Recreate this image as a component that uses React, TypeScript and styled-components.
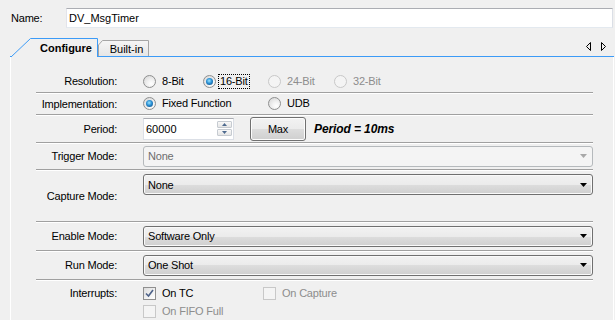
import React from "react";
import styled, { createGlobalStyle } from "styled-components";

const GlobalStyle = createGlobalStyle`
  html, body {
    margin: 0;
    padding: 0;
    background: #f0f0f0;
  }
  body {
    font-family: "Liberation Sans", Arial, sans-serif;
    font-size: 11px;
    letter-spacing: -0.2px;
    color: #000;
  }
`;

const Window = styled.div`
  width: 615px;
  height: 320px;
  overflow: hidden;
  background: #f0f0f0;
`;

const NameRow = styled.div`
  display: flex;
  align-items: center;
  padding: 8px 2px 0 11px;
  height: 20px;
`;

const NameLabel = styled.span`
  width: 55px;
`;

const NameInput = styled.div`
  flex: 1;
  height: 20px;
  box-sizing: border-box;
  background: #fff;
  border: 1px solid #e3e9ef;
  border-top-color: #abadb3;
  border-left-color: #e2e3ea;
  border-right-color: #dbdfe6;
  padding: 0 2px;
  display: flex;
  align-items: center;
  letter-spacing: 0;
`;

// tab strip
const TabStrip = styled.div`
  display: flex;
  align-items: flex-end;
  height: 19px;
  box-sizing: border-box;
  margin: 10px 1px 0 10px;
  padding-left: 1px;
  border-bottom: 1px solid #3c9bf7;
`;

const Tab = styled.div<{ $active?: boolean }>`
  position: relative;
  width: ${(p) => (p.$active ? 87 : 52)}px;
  height: ${(p) => (p.$active ? 19 : 16)}px;
  margin-bottom: ${(p) => (p.$active ? -1 : 0)}px;
  box-sizing: border-box;
  display: flex;
  align-items: center;
  justify-content: ${(p) => (p.$active ? "flex-end" : "center")};
  padding: ${(p) => (p.$active ? "1px 6px 0 0" : "1px 0 0 5px")};
  font-weight: ${(p) => (p.$active ? "bold" : "normal")};
  letter-spacing: 0;
  z-index: ${(p) => (p.$active ? 1 : 0)};
`;

const TabOutline = styled.svg`
  position: absolute;
  left: 0;
  top: 0;
`;

const TabLabel = styled.span`
  position: relative;
`;

const ScrollArrows = styled.svg`
  margin: 0 8px 5px auto;
`;

const Panel = styled.div`
  margin: 0 1px 0 10px;
  height: 263px;
  border-left: 1px solid #fff;
  border-right: 1px solid #fff;
  padding: 13px 20px 0 25px;
`;

const Row = styled.div<{ $h: number; $last?: boolean; $top?: boolean }>`
  display: grid;
  grid-template-columns: 81px 1fr;
  column-gap: 26px;
  height: ${(p) => p.$h}px;
  box-sizing: border-box;
  align-items: ${(p) => (p.$top ? "start" : "center")};
  padding-top: ${(p) => (p.$top ? 4 : 0)}px;
  border-bottom: ${(p) => (p.$last ? "none" : "1px solid #a0a0a0")};
  box-shadow: ${(p) => (p.$last ? "none" : "0 1px 0 #fff")};
`;

const Label = styled.span<{ $line?: number }>`
  text-align: right;
  white-space: nowrap;
  line-height: ${(p) => (p.$line ? `${p.$line}px` : "normal")};
`;

const Options = styled.div`
  display: flex;
  align-items: center;
`;

const Option = styled.div<{ $w?: number }>`
  display: flex;
  align-items: center;
  width: ${(p) => (p.$w ? `${p.$w}px` : "auto")};
  flex: none;
`;

const RadioCircle = styled.span<{ $checked?: boolean; $disabled?: boolean }>`
  position: relative;
  flex: none;
  width: 13px;
  height: 13px;
  box-sizing: border-box;
  border-radius: 50%;
  border: 1px solid ${(p) => (p.$disabled ? "#c8c8c8" : "#8e8f8f")};
  background: ${(p) =>
    p.$disabled
      ? "#f4f4f4"
      : "radial-gradient(circle at 65% 70%, #ffffff 0%, #f2f2f2 35%, #d8d8d8 90%)"};

  &::after {
    content: "";
    display: ${(p) => (p.$checked ? "block" : "none")};
    position: absolute;
    left: 2px;
    top: 2px;
    width: 7px;
    height: 7px;
    border-radius: 50%;
    background: radial-gradient(circle at 45% 40%, #9be6ff 0%, #2a8fd4 45%, #0c3f70 100%);
  }
`;

const OptionText = styled.span<{ $disabled?: boolean; $focus?: boolean }>`
  color: ${(p) => (p.$disabled ? "#8d8d8d" : "#000")};
  margin-left: ${(p) => (p.$focus ? 2 : 6)}px;
  padding: ${(p) => (p.$focus ? "0 1px" : "0")};
  border: ${(p) => (p.$focus ? "1px dotted #000" : "none")};
  line-height: 13px;
  white-space: nowrap;
`;

const CheckBox = styled.span<{ $disabled?: boolean }>`
  flex: none;
  width: 13px;
  height: 13px;
  box-sizing: border-box;
  border: 1px solid ${(p) => (p.$disabled ? "#c8c8c8" : "#8f8f8f")};
  background: ${(p) =>
    p.$disabled ? "#f4f4f4" : "linear-gradient(135deg, #dcdcdc 0%, #f6f6f6 70%, #ffffff 100%)"};
  display: flex;
  align-items: center;
  justify-content: center;
`;

const CheckGrid = styled.div`
  display: grid;
  grid-template-columns: 120px auto;
  grid-auto-rows: 18px;
  align-items: center;
`;

const PeriodControls = styled.div`
  display: flex;
  align-items: center;
`;

const SpinInput = styled.div`
  width: 91px;
  height: 22px;
  box-sizing: border-box;
  background: #fff;
  border: 1px solid #dbdfe6;
  border-top-color: #abadb3;
  display: flex;
  align-items: center;
  padding: 0 1px 0 2px;
  letter-spacing: 0;
`;

const SpinValue = styled.span`
  flex: 1;
`;

const Spinner = styled.div`
  display: flex;
  flex-direction: column;
  width: 15px;
`;

const SpinButton = styled.div`
  height: 7px;
  box-sizing: border-box;
  border: 1px solid #c6cbd1;
  border-radius: 1px;
  background: linear-gradient(#f8f8f8, #e6e6e6);
  display: flex;
  align-items: center;
  justify-content: center;
  & + & {
    margin-top: 1px;
  }
`;

const PushButton = styled.div`
  width: 56px;
  height: 24px;
  margin-left: 16px;
  box-sizing: border-box;
  border: 1px solid #707070;
  border-radius: 3px;
  background: linear-gradient(#f2f2f2 0%, #ebebeb 50%, #dddddd 50%, #cfcfcf 100%);
  box-shadow: inset 0 0 0 1px #fcfcfc;
  display: flex;
  align-items: center;
  justify-content: center;
`;

const PeriodNote = styled.span`
  margin-left: 8px;
  font-size: 12px;
  letter-spacing: -0.1px;
  font-weight: bold;
  font-style: italic;
`;

const Select = styled.div<{ $disabled?: boolean }>`
  height: 21px;
  box-sizing: border-box;
  border: 1px solid ${(p) => (p.$disabled ? "#b5b9bc" : "#707070")};
  border-radius: 3px;
  background: ${(p) =>
    p.$disabled
      ? "#f4f4f4"
      : "linear-gradient(#f2f2f2 0%, #ebebeb 50%, #dddddd 50%, #cfcfcf 100%)"};
  box-shadow: ${(p) => (p.$disabled ? "none" : "inset 0 0 0 1px #fafafa")};
  color: ${(p) => (p.$disabled ? "#6d6d6d" : "#000")};
  display: flex;
  align-items: center;
  padding: 0 5px 0 4px;
`;

const SelectText = styled.span`
  flex: 1;
`;

const CaptureSelect = styled(Select)`
  align-self: start;
  margin-top: 4px;
`;

const Arrow: React.FC<{ color: string }> = ({ color }) => (
  <svg width="7" height="4" viewBox="0 0 7 4">
    <path d="M0 0 H7 L3.5 4 Z" fill={color} />
  </svg>
);

const Radio: React.FC<{
  label: string;
  w?: number;
  checked?: boolean;
  disabled?: boolean;
  focus?: boolean;
}> = ({ label, w, checked, disabled, focus }) => (
  <Option $w={w}>
    <RadioCircle $checked={checked} $disabled={disabled} />
    <OptionText $disabled={disabled} $focus={focus}>
      {label}
    </OptionText>
  </Option>
);

const Check: React.FC<{ label: string; checked?: boolean; disabled?: boolean }> = ({
  label,
  checked,
  disabled,
}) => (
  <Option>
    <CheckBox $disabled={disabled}>
      {checked && (
        <svg width="9" height="9" viewBox="0 0 9 9">
          <path d="M1 4.5 L3.5 7 L8 1" stroke="#4d6289" strokeWidth="1.6" fill="none" />
        </svg>
      )}
    </CheckBox>
    <OptionText $disabled={disabled}>{label}</OptionText>
  </Option>
);

const DropDown: React.FC<{ value: string; disabled?: boolean }> = ({ value, disabled }) => (
  <Select $disabled={disabled}>
    <SelectText>{value}</SelectText>
    <Arrow color={disabled ? "#a8a8a8" : "#000"} />
  </Select>
);

export default function App() {
  return (
    <Window>
      <GlobalStyle />
      <NameRow>
        <NameLabel>Name:</NameLabel>
        <NameInput>DV_MsgTimer</NameInput>
      </NameRow>

      <TabStrip>
        <Tab $active>
          <TabOutline width="87" height="19" viewBox="0 0 87 19">
            <path d="M0 19 L19.5 0.5 H86.5 V19" fill="#f0f0f0" stroke="#3c9bf7" />
          </TabOutline>
          <TabLabel>Configure</TabLabel>
        </Tab>
        <Tab>
          <TabOutline width="52" height="16" viewBox="0 0 52 16">
            <defs>
              <linearGradient id="tabGrad" x1="0" y1="0" x2="0" y2="1">
                <stop offset="0" stopColor="#f6f6f6" />
                <stop offset="1" stopColor="#e6e6e6" />
              </linearGradient>
            </defs>
            <path
              d="M0.5 16 V5 L4.5 0.5 H50.5 V16"
              fill="url(#tabGrad)"
              stroke="#a5a5a5"
            />
          </TabOutline>
          <TabLabel>Built-in</TabLabel>
        </Tab>
        <ScrollArrows width="20" height="9" viewBox="0 0 20 9">
          <path d="M4.5 0.5 L0.5 4.5 L4.5 8.5 Z" fill="none" stroke="#000" />
          <path d="M15.5 0.5 L19.5 4.5 L15.5 8.5 Z" fill="none" stroke="#000" />
        </ScrollArrows>
      </TabStrip>

      <Panel>
        <Row $h={23}>
          <Label>Resolution:</Label>
          <Options>
            <Radio label="8-Bit" w={60} />
            <Radio label="16-Bit" w={65} checked focus />
            <Radio label="24-Bit" w={66} disabled />
            <Radio label="32-Bit" disabled />
          </Options>
        </Row>

        <Row $h={22}>
          <Label>Implementation:</Label>
          <Options>
            <Radio label="Fixed Function" w={125} checked />
            <Radio label="UDB" />
          </Options>
        </Row>

        <Row $h={28}>
          <Label>Period:</Label>
          <PeriodControls>
            <SpinInput>
              <SpinValue>60000</SpinValue>
              <Spinner>
                <SpinButton>
                  <svg width="5" height="3" viewBox="0 0 5 3">
                    <path d="M0 3 L2.5 0 L5 3 Z" fill="#4e6a8f" />
                  </svg>
                </SpinButton>
                <SpinButton>
                  <svg width="5" height="3" viewBox="0 0 5 3">
                    <path d="M0 0 L2.5 3 L5 0 Z" fill="#4e6a8f" />
                  </svg>
                </SpinButton>
              </Spinner>
            </SpinInput>
            <PushButton>Max</PushButton>
            <PeriodNote>Period = 10ms</PeriodNote>
          </PeriodControls>
        </Row>

        <Row $h={27}>
          <Label>Trigger Mode:</Label>
          <DropDown value="None" disabled />
        </Row>

        <Row $h={52}>
          <Label>Capture Mode:</Label>
          <CaptureSelect>
            <SelectText>None</SelectText>
            <Arrow color="#000" />
          </CaptureSelect>
        </Row>

        <Row $h={29}>
          <Label>Enable Mode:</Label>
          <DropDown value="Software Only" />
        </Row>

        <Row $h={29}>
          <Label>Run Mode:</Label>
          <DropDown value="One Shot" />
        </Row>

        <Row $h={40} $last $top>
          <Label $line={18}>Interrupts:</Label>
          <CheckGrid>
            <Check label="On TC" checked />
            <Check label="On Capture" disabled />
            <Check label="On FIFO Full" disabled />
          </CheckGrid>
        </Row>
      </Panel>
    </Window>
  );
}
